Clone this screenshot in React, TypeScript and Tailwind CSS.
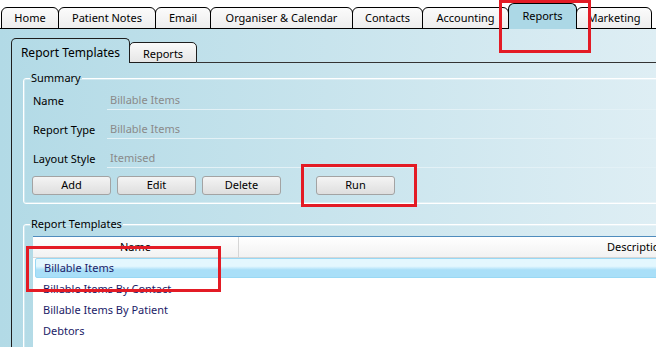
const topTabs = [
  { label: "Home", w: "w-[58px]" },
  { label: "Patient Notes", w: "w-[98px]" },
  { label: "Email", w: "w-[56px]" },
  { label: "Organiser & Calendar", w: "w-[143px]" },
  { label: "Contacts", w: "w-[71px]" },
  { label: "Accounting", w: "w-[87px]" },
  { label: "Reports", w: "w-[69px]", active: true },
  { label: "Marketing", w: "w-[76px]" },
];

const summaryRows = [
  { label: "Name", value: "Billable Items" },
  { label: "Report Type", value: "Billable Items" },
  { label: "Layout Style", value: "Itemised" },
];

const templates = [
  "Billable Items",
  "Billable Items By Contact",
  "Billable Items By Patient",
  "Debtors",
  "Balance By Contact",
];

function TopTab({ label, w, active }: { label: string; w: string; active?: boolean }) {
  if (active) {
    return (
      <div
        className={`${w} relative z-10 -mb-px -ml-px flex h-[26px] justify-center rounded-t-[6px] border border-b-0 border-black bg-[#acd8e6] pt-[4px]`}
      >
        {label}
      </div>
    );
  }
  return (
    <div
      className={`${w} -mb-px -ml-px flex h-[22px] items-center justify-center rounded-t-[6px] border border-black bg-linear-to-b from-[#fbfbfb] to-[#ededed]`}
    >
      {label}
    </div>
  );
}

function Button({ children }: { children: string }) {
  return (
    <button className="flex h-[19px] w-[79px] items-center justify-center rounded-[3px] border border-[#a3a3a3] bg-linear-to-b from-[#f4f4f4] to-[#dedede] text-black">
      {children}
    </button>
  );
}

export default function App() {
  return (
    <div className="relative h-[347px] w-[656px] overflow-hidden bg-white font-['Noto_Sans',sans-serif] text-[11px] text-black">
      {/* main tab strip */}
      <div className="flex h-[29px] items-end border-b border-black pl-[2px]">
        {topTabs.map((t) => (
          <TopTab key={t.label} {...t} />
        ))}
      </div>

      <div className="flex h-[318px] flex-col bg-linear-to-r from-[#b2dae6] to-[#deeef4] pl-[11px] pt-[9px]">
        {/* inner tab strip */}
        <div className="flex h-[25px] items-end">
          <div className="flex h-[25px] w-[119px] justify-center rounded-t-[5px] border border-b-0 border-[#1e1e1e] pt-[5px] text-[12px]">
            Report Templates
          </div>
          <div className="-ml-px flex h-[21px] w-[68px] justify-center rounded-t-[5px] border border-[#1e1e1e] bg-linear-to-b from-[#fafafa] to-[#e6e6e6] pt-[3px]">
            Reports
          </div>
          <div className="h-px flex-1 border-b border-[#333]" />
        </div>

        <div className="flex-1 border-l border-[#1e1e1e] pl-[11px] pt-[7px]">
          {/* Summary */}
          <fieldset className="w-[680px] rounded-[3px] border border-white p-0 pb-[8px] shadow-[inset_0_0_0_1px_rgba(255,255,255,0.35)]">
            <legend className="ml-[6px] px-[1px] leading-[16px]">Summary</legend>
            <div className="pl-[9px]">
              {summaryRows.map((r) => (
                <div key={r.label} className="flex h-[29px] items-center">
                  <div className="w-[74px] pt-[2px]">{r.label}</div>
                  <div className="h-[19px] flex-1 border-b border-[#e3f1f6] pl-[3px] leading-[18px] text-[#8a8a8a]">
                    {r.value}
                  </div>
                </div>
              ))}
              <div className="-ml-px mt-[3px] flex gap-[6px]">
                <Button>Add</Button>
                <Button>Edit</Button>
                <Button>Delete</Button>
                <div className="ml-[29px]">
                  <Button>Run</Button>
                </div>
              </div>
            </div>
          </fieldset>

          {/* Report templates */}
          <fieldset className="mt-[12px] w-[680px] rounded-[3px] border border-white p-0 shadow-[inset_0_0_0_1px_rgba(255,255,255,0.35)]">
            <legend className="ml-[6px] px-[1px] leading-[16px]">Report Templates</legend>
            <div className="ml-[9px] mt-[4px] h-[200px] border-t border-[#4f8cbd] bg-white">
              <div className="flex h-[21px] items-center border-b border-[#d6d6d6] bg-linear-to-b from-white to-[#f2f2f2]">
                <div className="w-[206px] border-r border-[#d6d6d6] text-center leading-[20px]">Name</div>
                <div className="flex-1 pl-[368px]">Description</div>
              </div>
              <div className="text-[#1c1c68]">
                {templates.map((name, i) =>
                  i === 0 ? (
                    <div
                      key={name}
                      className="mx-[2px] mb-px flex h-[20px] items-center rounded-[2px] border border-[#98d8f4] bg-linear-to-b from-[#e3f7fe] from-40% to-[#a9dff8] to-60% pl-[8px]"
                    >
                      {name}
                    </div>
                  ) : (
                    <div key={name} className="flex h-[21px] items-center pl-[10px]">
                      {name}
                    </div>
                  ),
                )}
              </div>
            </div>
          </fieldset>
        </div>
      </div>

      {/* annotation boxes */}
      <div className="absolute left-[499px] top-0 h-[53px] w-[92px] border-[3px] border-[#e31b25]" />
      <div className="absolute left-[301px] top-[164px] h-[43px] w-[116px] border-[3px] border-[#e31b25]" />
      <div className="absolute left-[26px] top-[246px] h-[46px] w-[195px] border-[3px] border-[#e31b25]" />
    </div>
  );
}
